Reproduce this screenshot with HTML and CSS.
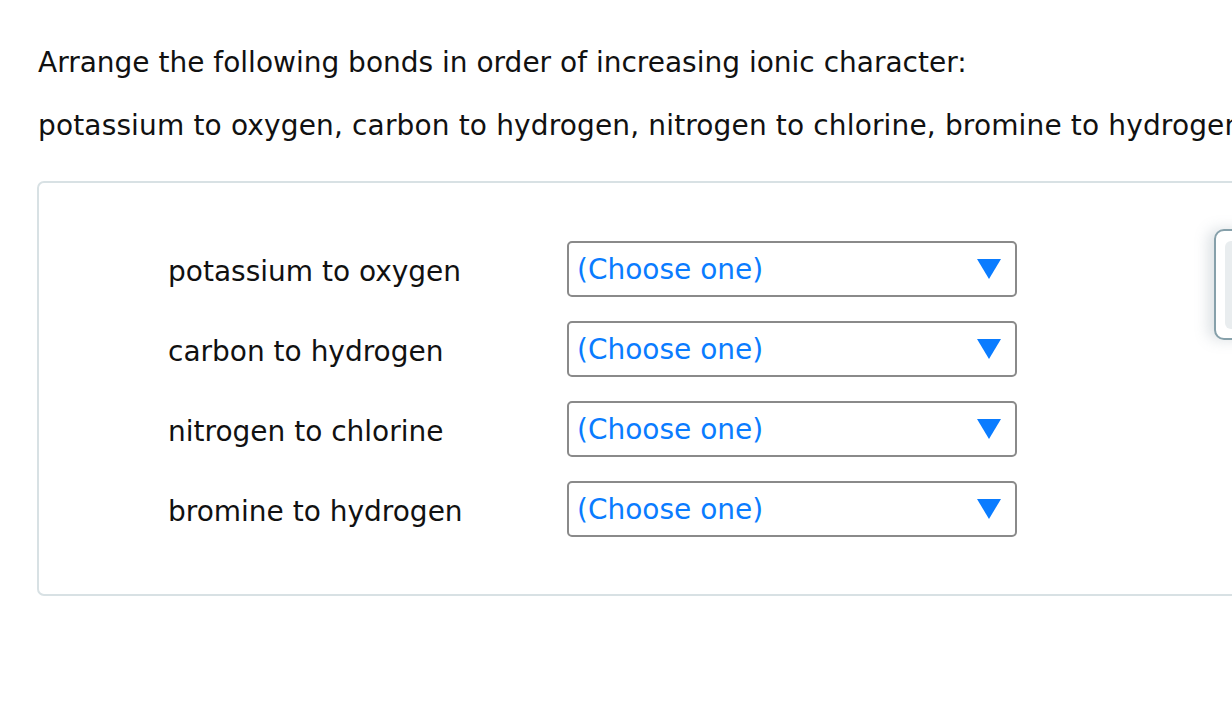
FILE: index.html
```html
<!DOCTYPE html>
<html>
<head>
<meta charset="utf-8">
<link rel="stylesheet" href="styles.css">
</head>
<body>
<div class="page">
  <p class="prompt">Arrange the following bonds in order of increasing ionic character:</p>
  <p class="prompt list">potassium to oxygen, carbon to hydrogen, nitrogen to chlorine, bromine to hydrogen</p>
  <div class="answer-box">
    <div class="row">
      <span class="label">potassium to oxygen</span>
      <div class="select"><span class="select-text">(Choose one)</span><svg class="arrow" width="24" height="20" viewBox="0 0 24 20"><polygon points="0,0 24,0 12,20" fill="#0a7cff"/></svg></div>
    </div>
    <div class="row">
      <span class="label">carbon to hydrogen</span>
      <div class="select"><span class="select-text">(Choose one)</span><svg class="arrow" width="24" height="20" viewBox="0 0 24 20"><polygon points="0,0 24,0 12,20" fill="#0a7cff"/></svg></div>
    </div>
    <div class="row">
      <span class="label">nitrogen to chlorine</span>
      <div class="select"><span class="select-text">(Choose one)</span><svg class="arrow" width="24" height="20" viewBox="0 0 24 20"><polygon points="0,0 24,0 12,20" fill="#0a7cff"/></svg></div>
    </div>
    <div class="row">
      <span class="label">bromine to hydrogen</span>
      <div class="select"><span class="select-text">(Choose one)</span><svg class="arrow" width="24" height="20" viewBox="0 0 24 20"><polygon points="0,0 24,0 12,20" fill="#0a7cff"/></svg></div>
    </div>
  </div>
  <div class="side-tools"><div class="side-inner"></div></div>
</div>
</body>
</html>
```
FILE: styles.css
```css
html, body {
  margin: 0;
  padding: 0;
  background: #fff;
  overflow: hidden;
}
body {
  width: 1232px;
  height: 718px;
  font-family: "DejaVu Sans", Verdana, sans-serif;
  color: #111;
}
.page {
  position: relative;
  padding: 41px 0 0 37px;
  height: 718px;
  box-sizing: border-box;
  overflow: hidden;
}
.prompt {
  margin: 0 0 0 1px;
  font-size: 28px;
  line-height: 44px;
  white-space: nowrap;
}
.list {
  margin-top: 19px;
  letter-spacing: 0.15px;
}
.answer-box {
  margin-top: 33px;
  width: 1260px;
  height: 415px;
  box-sizing: border-box;
  border: 2px solid #d8e1e4;
  border-radius: 7px;
  padding: 57px 0 0 129px;
  display: flex;
  flex-direction: column;
  gap: 24px;
}
.row {
  display: flex;
  align-items: center;
  height: 56px;
}
.row:first-child {
  margin-top: 1px;
}
.label {
  width: 399px;
  font-size: 28px;
  white-space: nowrap;
  padding-top: 5px;
}
.select {
  width: 450px;
  height: 56px;
  box-sizing: border-box;
  border: 2px solid #8a8a8a;
  border-radius: 5px;
  display: flex;
  align-items: center;
  justify-content: space-between;
  padding: 0 14px 0 8px;
}
.select-text {
  font-size: 28px;
  color: #0a7cff;
  margin-top: 1px;
}
.arrow {
  display: block;
}
.side-tools {
  position: absolute;
  left: 1214px;
  top: 229px;
  width: 60px;
  height: 111px;
  box-sizing: border-box;
  border: 2px solid #86a0aa;
  border-radius: 10px;
  background: #fff;
  box-shadow: -6px 0 14px rgba(120, 140, 150, 0.25);
  padding: 10px 0 0 9px;
}
.side-inner {
  width: 60px;
  height: 88px;
  background: #e9edef;
  border-radius: 6px;
}
```
